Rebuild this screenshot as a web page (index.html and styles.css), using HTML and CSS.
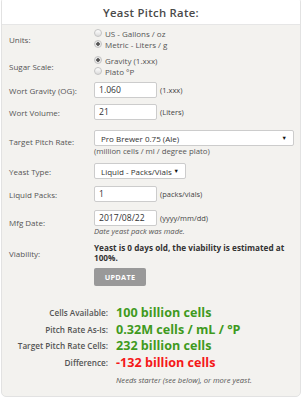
FILE: index.html
```html
<!DOCTYPE html>
<html lang="en">
<head>
    <meta charset="UTF-8">
    <meta name="viewport" content="width=device-width, initial-scale=1.0">
    <title>Yeast Pitch Rate</title>
    <link rel="stylesheet" href="styles.css">
</head>
<body>
    <div class="panel">
        <div class="panel-head">Yeast Pitch Rate:</div>

        <div class="panel-body">
            <div class="row row-units">
                <div class="label">Units:</div>
                <div class="field radios">
                    <label><input type="radio" name="units"> US - Gallons / oz</label>
                    <label><input type="radio" name="units" checked> Metric - Liters / g</label>
                </div>
            </div>

            <div class="row row-sugar">
                <div class="label">Sugar Scale:</div>
                <div class="field radios">
                    <label><input type="radio" name="scale" checked> Gravity (1.xxx)</label>
                    <label><input type="radio" name="scale"> Plato °P</label>
                </div>
            </div>

            <div class="row row-og">
                <div class="label">Wort Gravity (OG):</div>
                <div class="field inline">
                    <input class="text" type="text" value="1.060">
                    <span class="unit">(1.xxx)</span>
                </div>
            </div>

            <div class="row row-vol">
                <div class="label">Wort Volume:</div>
                <div class="field inline">
                    <input class="text" type="text" value="21">
                    <span class="unit">(Liters)</span>
                </div>
            </div>

            <div class="row row-target">
                <div class="label">Target Pitch Rate:</div>
                <div class="field">
                    <div class="select wide">
                        <span>Pro Brewer 0.75 (Ale)</span>
                        <span class="arrow">▼</span>
                    </div>
                    <div class="note">(million cells / ml / degree plato)</div>
                </div>
            </div>

            <div class="row row-type">
                <div class="label">Yeast Type:</div>
                <div class="field">
                    <div class="select narrow">
                        <span>Liquid - Packs/Vials</span>
                        <span class="arrow">▼</span>
                    </div>
                </div>
            </div>

            <div class="row row-packs">
                <div class="label">Liquid Packs:</div>
                <div class="field inline">
                    <input class="text" type="text" value="1">
                    <span class="unit">(packs/vials)</span>
                </div>
            </div>

            <div class="row row-date">
                <div class="label">Mfg Date:</div>
                <div class="field">
                    <div class="inline">
                        <input class="text" type="text" value="2017/08/22">
                        <span class="unit">(yyyy/mm/dd)</span>
                    </div>
                    <div class="note italic">Date yeast pack was made.</div>
                </div>
            </div>

            <div class="row row-viab">
                <div class="label">Viability:</div>
                <div class="field viab">Yeast is 0 days old, the viability is estimated at 100%.</div>
            </div>

            <div class="row row-btn">
                <div class="label"></div>
                <div class="field"><div class="btn">UPDATE</div></div>
            </div>

            <div class="results">
                <div class="res-label">Cells Available:</div>
                <div class="res-value">100 billion cells</div>
                <div class="res-label">Pitch Rate As-Is:</div>
                <div class="res-value">0.32M cells / mL / °P</div>
                <div class="res-label">Target Pitch Rate Cells:</div>
                <div class="res-value">232 billion cells</div>
                <div class="res-label">Difference:</div>
                <div class="res-value red">-132 billion cells</div>
                <div class="res-label"></div>
                <div class="res-note">Needs starter (see below), or more yeast.</div>
            </div>
        </div>
    </div>
</body>
</html>
```

FILE: styles.css
```css
*{
    margin: 0;
    padding: 0;
    box-sizing: border-box;
}

body{
    background-color: #ffffff;
    font-family: "Open Sans", "Liberation Sans", sans-serif;
    color: #555555;
}

.panel{
    margin: -3px 1px 0 1px;
    width: 300px;
    height: 400px;
    border: 1px solid #e2e2e2;
    border-radius: 5px;
    background-color: #f3f2ef;
    overflow: hidden;
}

.panel-head{
    height: 27px;
    padding-top: 3px;
    background-color: #ffffff;
    border-bottom: 1px solid #e6e6e6;
    display: flex;
    justify-content: center;
    align-items: center;
    font-size: 11.3px;
    font-weight: 600;
    letter-spacing: 0.3px;
    color: #4a4a4a;
}

.panel-body{
    padding: 4px 7px 0 7px;
}

.row{
    display: grid;
    grid-template-columns: 85px 200px;
    align-items: center;
    font-size: 8px;
}

.label{
    color: #555555;
}

.row-sugar{ margin-top: 6px; }
.row-og{ margin-top: 5px; }
.row-vol{ margin-top: 6px; }
.row-target{ margin-top: 10px; align-items: start; }
.row-target .label{ margin-top: 6px; }
.row-type{ margin-top: 6px; }
.row-packs{ margin-top: 7px; }
.row-date{ margin-top: 8px; align-items: start; }
.row-date .label{ margin-top: 7px; }
.row-viab{ margin-top: 6px; }
.row-btn{ margin-top: 5px; }

.radios{
    display: flex;
    flex-direction: column;
    color: #555555;
    line-height: 10.5px;
}

.radios label{
    display: flex;
    align-items: center;
    gap: 3px;
}

input[type="radio"]{
    -webkit-appearance: none;
    appearance: none;
    width: 8px;
    height: 8px;
    border-radius: 50%;
    border: 1px solid #c4c4c4;
    background: linear-gradient(#ffffff, #dcdcdc);
    margin-bottom: 2px;
}

input[type="radio"]:checked{
    background: radial-gradient(circle, #555555 0, #555555 1.5px, #e6e6e6 2px);
}

.inline{
    display: flex;
    align-items: center;
}

.text{
    width: 63px;
    height: 16px;
    border: 1px solid #cccccc;
    border-radius: 2px;
    background-color: #ffffff;
    padding: 0 4px;
    font-family: "Open Sans", "Liberation Sans", sans-serif;
    font-size: 8.6px;
    color: #333333;
    outline: none;
}

.unit{
    margin-left: 3px;
    font-size: 7.5px;
    color: #444444;
}

.select{
    height: 16px;
    border: 1px solid #cccccc;
    border-radius: 2px;
    background-color: #ffffff;
    display: flex;
    justify-content: space-between;
    align-items: center;
    padding: 0 6px 0 6px;
    font-size: 8px;
    color: #333333;
}

.select.wide{ width: 200px; }
.select.narrow{ width: 92px; }

.arrow{
    font-size: 5.5px;
    color: #111111;
}

.note{
    font-size: 7.8px;
    color: #555555;
    line-height: 11px;
}

.italic{
    font-style: italic;
    font-size: 7.6px;
}

.viab{
    font-weight: 700;
    color: #333333;
    line-height: 10px;
    font-size: 8.2px;
}

.btn{
    width: 52px;
    height: 18px;
    background-color: #999999;
    color: #ffffff;
    font-weight: 700;
    font-size: 7.3px;
    letter-spacing: 0.3px;
    display: flex;
    justify-content: center;
    align-items: center;
    border-radius: 2px;
}

.results{
    margin-top: 19px;
    display: grid;
    grid-template-columns: 99px 1fr;
    column-gap: 8px;
    align-items: center;
}

.res-label{
    text-align: right;
    font-size: 8.2px;
    font-weight: 600;
    color: #555555;
    line-height: 16.7px;
}

.res-value{
    font-size: 12.6px;
    font-weight: 700;
    color: #3f9a1d;
    line-height: 16.7px;
}

.res-value.red{
    color: #f51818;
}

.res-note{
    font-size: 7.6px;
    font-style: italic;
    color: #555555;
    line-height: 17px;
}
```
